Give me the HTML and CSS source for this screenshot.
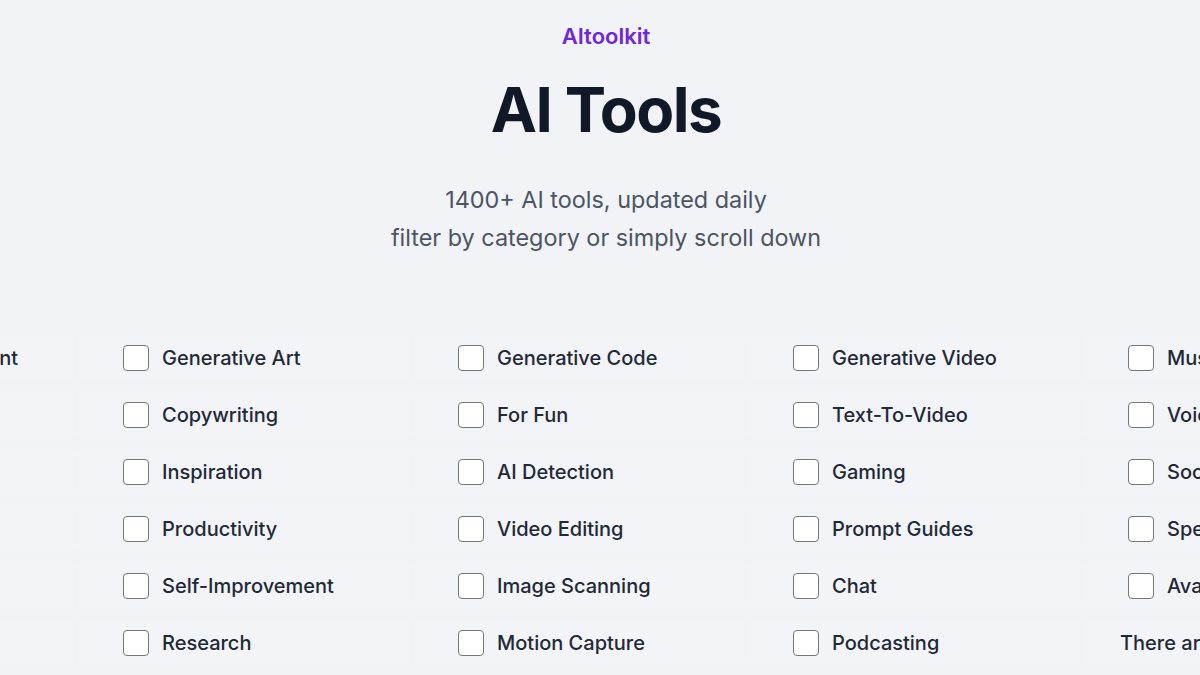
FILE: index.html
```html
<!DOCTYPE html>
<html lang="en">
<head>
<meta charset="utf-8">
<title>AI Tools</title>
<link rel="stylesheet" href="styles.css">
</head>
<body>
<header class="hero">
  <p class="brand">AItoolkit</p>
  <h1 class="title">AI Tools</h1>
  <p class="lead">1400+ AI tools, updated daily<br>filter by category or simply scroll down</p>
</header>
<section class="filters">
  <div class="grid">
    <label class="cell"><span class="box"></span><span class="name">Personal Assistant</span></label>
    <label class="cell"><span class="box"></span><span class="name">Generative Art</span></label>
    <label class="cell"><span class="box"></span><span class="name">Generative Code</span></label>
    <label class="cell"><span class="box"></span><span class="name">Generative Video</span></label>
    <label class="cell"><span class="box"></span><span class="name">Music</span></label>

    <label class="cell"><span class="box"></span><span class="name">Text</span></label>
    <label class="cell"><span class="box"></span><span class="name">Copywriting</span></label>
    <label class="cell"><span class="box"></span><span class="name">For Fun</span></label>
    <label class="cell"><span class="box"></span><span class="name">Text-To-Video</span></label>
    <label class="cell"><span class="box"></span><span class="name">Voice</span></label>

    <label class="cell"><span class="box"></span><span class="name">Design</span></label>
    <label class="cell"><span class="box"></span><span class="name">Inspiration</span></label>
    <label class="cell"><span class="box"></span><span class="name">AI Detection</span></label>
    <label class="cell"><span class="box"></span><span class="name">Gaming</span></label>
    <label class="cell"><span class="box"></span><span class="name">Social Media</span></label>

    <label class="cell"><span class="box"></span><span class="name">Audio</span></label>
    <label class="cell"><span class="box"></span><span class="name">Productivity</span></label>
    <label class="cell"><span class="box"></span><span class="name">Video Editing</span></label>
    <label class="cell"><span class="box"></span><span class="name">Prompt Guides</span></label>
    <label class="cell"><span class="box"></span><span class="name">Speech</span></label>

    <label class="cell"><span class="box"></span><span class="name">Search</span></label>
    <label class="cell"><span class="box"></span><span class="name">Self-Improvement</span></label>
    <label class="cell"><span class="box"></span><span class="name">Image Scanning</span></label>
    <label class="cell"><span class="box"></span><span class="name">Chat</span></label>
    <label class="cell"><span class="box"></span><span class="name">Avatars</span></label>

    <label class="cell"><span class="box"></span><span class="name">Email</span></label>
    <label class="cell"><span class="box"></span><span class="name">Research</span></label>
    <label class="cell"><span class="box"></span><span class="name">Motion Capture</span></label>
    <label class="cell"><span class="box"></span><span class="name">Podcasting</span></label>
    <div class="cell note">There are 1400+ tools listed</div>
  </div>
</section>
</body>
</html>
```

FILE: styles.css
```css
html, body {
  margin: 0;
  padding: 0;
}
body {
  background: #f2f3f7;
  font-family: Inter, "Noto Sans", sans-serif;
  color: #1f2937;
  overflow: hidden;
  width: 1200px;
  height: 675px;
}
.hero {
  display: flex;
  flex-direction: column;
  align-items: center;
  padding-left: 12px;
  padding-top: 22px;
}
.brand {
  margin: 0;
  font-size: 22px;
  font-weight: 600;
  color: #6d28d9;
  line-height: 28px;
}
.title {
  margin: 24px 0 0;
  font-size: 62px;
  font-weight: 700;
  color: #111827;
  line-height: 72px;
  letter-spacing: -1.5px;
}
.lead {
  margin: 35px 0 0;
  font-size: 23.4px;
  font-weight: 400;
  line-height: 38px;
  color: #4b5563;
  text-align: center;
}
.filters {
  margin-top: 80px;
}
.grid {
  display: grid;
  grid-template-columns: repeat(5, 333px);
  column-gap: 2px;
  row-gap: 16px;
  margin-left: -258px;
}
.cell {
  display: flex;
  align-items: center;
  height: 41px;
  padding-left: 46px;
  background: rgba(255, 255, 255, 0.1);
  white-space: nowrap;
}
.box {
  width: 24px;
  height: 24px;
  border: 1.5px solid #747678;
  border-radius: 4px;
  background: #fff;
  flex: none;
}
.name {
  margin-left: 13px;
  font-size: 20px;
  font-weight: 500;
  color: #1f2937;
}
.cell:first-child {
  justify-content: flex-end;
  padding-right: 57px;
}
.note {
  padding-left: 38px;
  font-size: 20px;
  font-weight: 500;
  color: #1f2937;
}
```
